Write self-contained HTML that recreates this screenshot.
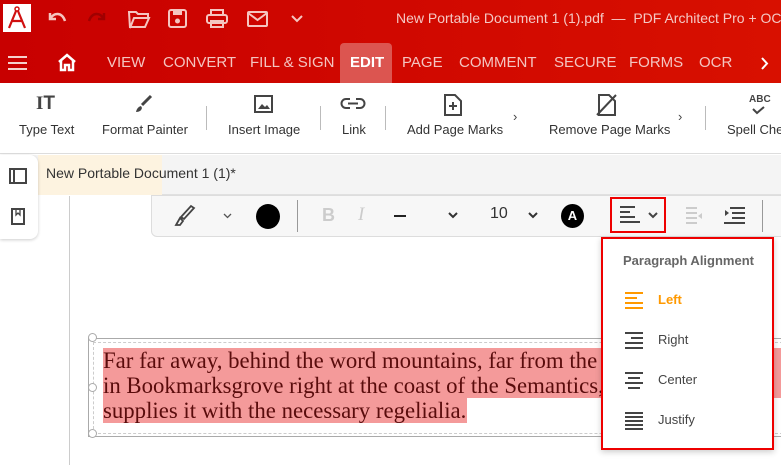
<!DOCTYPE html>
<html><head><meta charset="utf-8"><style>
*{margin:0;padding:0;box-sizing:border-box}
body{width:781px;height:465px;overflow:hidden;position:relative;background:#fff;font-family:"Liberation Sans",sans-serif}
.a{position:absolute}
.top{left:0;top:0;width:781px;height:83px;background:linear-gradient(90deg,#c80000,#d81000)}
.tab{top:43px;height:40px;line-height:40px;color:#f4c4c0;font-size:15px}
.rib{top:83px;left:0;width:781px;height:71px;background:#fff;border-bottom:1px solid #ddd}
.rl{top:122px;font-size:13px;color:#333}
.sep{width:1px;background:#bbb}
svg{position:absolute;overflow:visible}
.ln{height:25px;line-height:25px;background:#f49a9a;display:block;white-space:nowrap}
</style></head><body>
<div class="a top"></div>
<div class="a" style="left:3px;top:4px;width:28px;height:28px;background:#fff"></div>
<svg style="left:6px;top:6px" width="22" height="24"><circle cx="11" cy="3" r="2" fill="none" stroke="#d01010" stroke-width="1.5"/><path d="M10 5 L3 22 M12 5 L19 22 M5 15 h12" fill="none" stroke="#d01010" stroke-width="2.2"/></svg>
<svg style="left:46px;top:9px" width="22" height="18"><path d="M4 4 v6 h6 M4 10 C8 3,16 3,19 12" fill="none" stroke="#f5c5c0" stroke-width="2.5"/></svg>
<svg style="left:86px;top:9px" width="22" height="18"><path d="M18 4 v6 h-6 M18 10 C14 3,6 3,3 12" fill="none" stroke="#a00000" stroke-width="2.5"/></svg>
<svg style="left:128px;top:10px" width="22" height="18"><path d="M1 2 h7 l2 2 h10 v4 H6 l-4 10 z M6 8 h15 l-4 9 H2" fill="none" stroke="#f5c5c0" stroke-width="2"/></svg>
<svg style="left:168px;top:9px" width="20" height="20"><rect x="1" y="1" width="17" height="17" rx="2" fill="none" stroke="#f5c5c0" stroke-width="2"/><rect x="5" y="1" width="9" height="5" fill="#f5c5c0"/><circle cx="9.5" cy="12" r="2.5" fill="#f5c5c0"/></svg>
<svg style="left:206px;top:9px" width="22" height="20"><rect x="5" y="1" width="12" height="5" fill="none" stroke="#f5c5c0" stroke-width="2"/><rect x="1" y="6" width="20" height="8" rx="2" fill="none" stroke="#f5c5c0" stroke-width="2"/><rect x="5" y="12" width="12" height="6" fill="none" stroke="#f5c5c0" stroke-width="2"/></svg>
<svg style="left:247px;top:11px" width="22" height="16"><rect x="1" y="1" width="19" height="14" rx="1" fill="none" stroke="#f5c5c0" stroke-width="2"/><path d="M1 2 l9.5 7 9.5-7" fill="none" stroke="#f5c5c0" stroke-width="2"/></svg>
<svg style="left:291px;top:15px" width="12" height="8"><path d="M1 1 l5 5 5-5" fill="none" stroke="#f5c5c0" stroke-width="2"/></svg>
<div class="a" style="left:396px;top:10px;color:#f4c8c4;font-size:14px;white-space:nowrap">New Portable Document 1 (1).pdf &nbsp;— &nbsp;PDF Architect Pro + OCR</div>
<svg style="left:8px;top:56px" width="20" height="14"><path d="M0 1h19M0 7h19M0 13h19" stroke="#f5d0cc" stroke-width="2"/></svg>
<svg style="left:57px;top:53px" width="20" height="19"><path d="M2 9 L10 2 L18 9 M4 8 v9 h4 v-5 h4 v5 h4 V8" fill="none" stroke="#fff" stroke-width="2.5"/></svg>
<div class="a tab" style="left:107px">VIEW</div>
<div class="a tab" style="left:163px">CONVERT</div>
<div class="a tab" style="left:250px">FILL &amp; SIGN</div>
<div class="a" style="left:340px;top:43px;width:52px;height:40px;background:#dc5550;border-radius:4px 4px 0 0"></div>
<div class="a tab" style="left:350px;color:#fff;font-weight:bold">EDIT</div>
<div class="a tab" style="left:402px">PAGE</div>
<div class="a tab" style="left:459px">COMMENT</div>
<div class="a tab" style="left:554px">SECURE</div>
<div class="a tab" style="left:629px">FORMS</div>
<div class="a tab" style="left:699px">OCR</div>
<svg style="left:761px;top:57px" width="8" height="13"><path d="M1 1l5 5.5-5 5.5" fill="none" stroke="#fff" stroke-width="2"/></svg>
<div class="a rib"></div>
<div class="a" style="left:36px;top:93px;font-size:19px;color:#444;font-family:'Liberation Serif',serif;font-weight:bold">I<span style="font-family:'Liberation Sans'">T</span></div>
<svg style="left:134px;top:95px" width="20" height="18"><path d="M17 1 L8 10" stroke="#444" stroke-width="3"/><path d="M7 11 q-4 1-5 6 q5 0 6-4z" fill="#444"/></svg>
<svg style="left:254px;top:95px" width="20" height="18"><rect x="1" y="1" width="17" height="16" fill="none" stroke="#444" stroke-width="2"/><path d="M4 14 l4-5 3 3 2-2 3 4z" fill="#444"/></svg>
<svg style="left:341px;top:98px" width="24" height="12"><path d="M9 1 H5 a4.5 4.5 0 0 0 0 9 H9 M15 1 h4 a4.5 4.5 0 0 1 0 9 h-4 M7 5.5 h10" fill="none" stroke="#444" stroke-width="2"/></svg>
<svg style="left:444px;top:94px" width="18" height="22"><path d="M1 1 h10 l6 6 v14 H1z" fill="none" stroke="#444" stroke-width="2"/><path d="M9 8v8M5 12h8" stroke="#444" stroke-width="2"/></svg>
<svg style="left:596px;top:94px" width="22" height="22"><path d="M3 1 h10 l6 6 v14 H3z M1 21 L20 1" fill="none" stroke="#444" stroke-width="2"/></svg>
<div class="a" style="left:749px;top:94px;font-size:10px;font-weight:bold;color:#444">ABC</div>
<svg style="left:752px;top:106px" width="14" height="9"><path d="M1 3l4 4 7-6" fill="none" stroke="#444" stroke-width="2"/></svg>
<div class="a rl" style="left:19px">Type Text</div>
<div class="a rl" style="left:102px">Format Painter</div>
<div class="a sep" style="left:206px;top:106px;height:24px"></div>
<div class="a rl" style="left:228px">Insert Image</div>
<div class="a sep" style="left:320px;top:106px;height:24px"></div>
<div class="a rl" style="left:342px">Link</div>
<div class="a sep" style="left:385px;top:106px;height:24px"></div>
<div class="a rl" style="left:407px">Add Page Marks</div>
<div class="a" style="left:513px;top:109px;font-size:13px;color:#444">›</div>
<div class="a rl" style="left:549px">Remove Page Marks</div>
<div class="a" style="left:678px;top:109px;font-size:13px;color:#444">›</div>
<div class="a sep" style="left:705px;top:106px;height:24px"></div>
<div class="a rl" style="left:727px;white-space:nowrap">Spell Check</div>
<div class="a" style="left:0;top:155px;width:781px;height:40px;background:#f4f4f4;border-bottom:1px solid #e0e0e0"></div>
<div class="a" style="left:38px;top:155px;width:124px;height:40px;background:#fdf3e0;font-size:14px;color:#333;line-height:36px;padding-left:8px;white-space:nowrap">New Portable Document 1 (1)*</div>
<div class="a" style="left:0;top:155px;width:38px;height:84px;background:#fff;border-radius:0 8px 8px 0;box-shadow:0 1px 3px rgba(0,0,0,.2)"></div>
<svg style="left:9px;top:168px" width="18" height="16"><rect x="1" y="1" width="16" height="14" fill="none" stroke="#444" stroke-width="2"/><path d="M5 1v14" stroke="#444" stroke-width="2"/></svg>
<svg style="left:11px;top:208px" width="14" height="17"><rect x="1" y="1" width="12" height="15" fill="none" stroke="#444" stroke-width="2"/><path d="M5 1v6l2-2 2 2V1" fill="none" stroke="#444" stroke-width="1.3"/></svg>
<div class="a" style="left:69px;top:196px;width:1px;height:269px;background:#ccc"></div>
<div class="a" style="left:151px;top:195px;width:640px;height:42px;background:#f7f7f7;border:1px solid #ddd;border-radius:0 0 0 6px"></div>
<svg style="left:174px;top:206px" width="24" height="20"><path d="M20 2 L10 13 l-3 -2 L17 0z M6 12 l3 3 -3 4 H2z" fill="none" stroke="#444" stroke-width="1.8"/></svg>
<svg style="left:223px;top:213px" width="9" height="6"><path d="M1 1l3.5 3.5L8 1" fill="none" stroke="#555" stroke-width="1.3"/></svg>
<div class="a" style="left:256px;top:204px;width:24px;height:25px;border-radius:50%;background:#000"></div>
<div class="a sep" style="left:297px;top:200px;height:32px;background:#999"></div>
<div class="a" style="left:322px;top:205px;font-size:18px;font-weight:bold;color:#ccc">B</div>
<div class="a" style="left:358px;top:204px;font-size:19px;font-style:italic;color:#ccc;font-family:'Liberation Serif',serif">I</div>
<div class="a" style="left:394px;top:215px;width:12px;height:2px;background:#222"></div>
<svg style="left:448px;top:212px" width="10" height="7"><path d="M1 1l4 4 4-4" fill="none" stroke="#333" stroke-width="2"/></svg>
<div class="a" style="left:490px;top:205px;font-size:16px;color:#333">10</div>
<svg style="left:528px;top:212px" width="10" height="7"><path d="M1 1l4 4 4-4" fill="none" stroke="#333" stroke-width="2"/></svg>
<div class="a" style="left:561px;top:204px;width:23px;height:24px;border-radius:50%;background:#000;color:#fff;font-size:13px;font-weight:bold;text-align:center;line-height:24px">A</div>
<div class="a" style="left:610px;top:197px;width:56px;height:36px;border:2.5px solid #e00"></div>
<svg style="left:620px;top:206px" width="20" height="18"><path d="M0 1h15M0 6h10M0 11h15M0 16h20" stroke="#444" stroke-width="2"/></svg>
<svg style="left:648px;top:212px" width="10" height="7"><path d="M1 1l4 4 4-4" fill="none" stroke="#444" stroke-width="2"/></svg>
<svg style="left:686px;top:207px" width="22" height="20"><path d="M0 1h11M0 6h11M0 11h11M0 16h11" stroke="#ccc" stroke-width="2"/><path d="M16 6l-4 3 4 3z" fill="#ccc"/></svg>
<svg style="left:724px;top:207px" width="22" height="20"><path d="M6 1h15M8 6h13M8 11h13M0 16h21" stroke="#444" stroke-width="2"/><path d="M1 3v6l4-3z" fill="#444"/></svg>
<div class="a sep" style="left:762px;top:200px;height:32px;background:#999"></div>
<div class="a" style="left:88px;top:338px;width:700px;height:99px;border:1px solid #aaa"></div>
<div class="a" style="left:93px;top:342px;width:700px;height:92px;border:1px dashed #ccc"></div>
<div class="a" style="left:88px;top:333px;width:9px;height:9px;border:1px solid #aaa;border-radius:50%;background:#fff"></div>
<div class="a" style="left:88px;top:383px;width:9px;height:9px;border:1px solid #aaa;border-radius:50%;background:#fff"></div>
<div class="a" style="left:88px;top:429px;width:9px;height:9px;border:1px solid #aaa;border-radius:50%;background:#fff"></div>
<div class="a" style="left:103px;top:348px;width:690px;font-family:'Liberation Serif',serif;font-size:22.8px;color:#5a0c0c">
<div class="ln">Far far away, behind the word mountains, far from the countries</div>
<div class="ln">in Bookmarksgrove right at the coast of the Semantics, a large</div>
<div class="ln" style="width:364px">supplies it with the necessary regelialia.</div></div>
<div class="a" style="left:601px;top:237px;width:173px;height:213px;background:#fff;border:2.5px solid #e00;box-shadow:0 2px 6px rgba(0,0,0,.2)"></div>
<div class="a" style="left:623px;top:253px;font-size:13px;font-weight:bold;color:#666">Paragraph Alignment</div>
<svg style="left:625px;top:292px" width="18" height="18"><path d="M0 1h18M0 6h12M0 11h18M0 16h18" stroke="#f90" stroke-width="2"/></svg>
<div class="a" style="left:658px;top:292px;font-size:13px;font-weight:bold;color:#f90">Left</div>
<svg style="left:625px;top:332px" width="18" height="18"><path d="M0 1h18M6 6h12M0 11h18M0 16h18" stroke="#444" stroke-width="2"/></svg>
<div class="a" style="left:658px;top:332px;font-size:13px;color:#444">Right</div>
<svg style="left:625px;top:372px" width="18" height="18"><path d="M0 1h18M3 6h12M0 11h18M3 16h12" stroke="#444" stroke-width="2"/></svg>
<div class="a" style="left:658px;top:372px;font-size:13px;color:#444">Center</div>
<svg style="left:625px;top:412px" width="18" height="18"><path d="M0 1h18M0 5h18M0 9h18M0 13h18M0 17h18" stroke="#444" stroke-width="2"/></svg>
<div class="a" style="left:658px;top:412px;font-size:13px;color:#444">Justify</div>
</body></html>
